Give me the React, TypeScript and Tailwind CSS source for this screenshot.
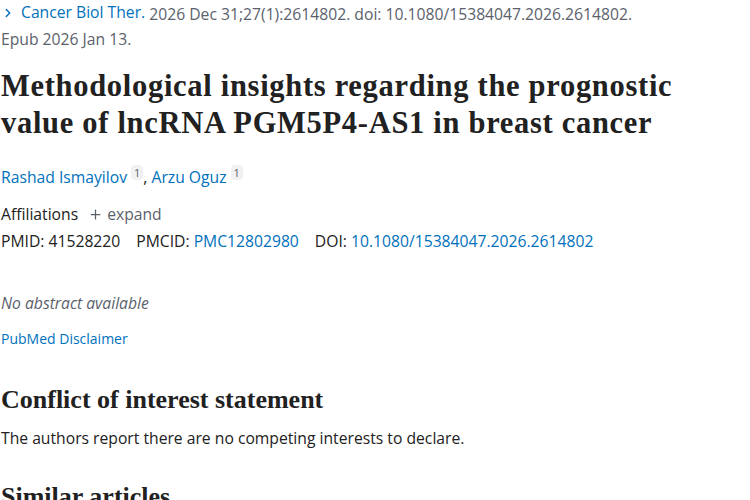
import { ChevronRight, Plus } from "lucide-react";

const sans = { fontFamily: '"Open Sans", "Noto Sans", sans-serif' };
const serif = { fontFamily: '"Liberation Serif", "DejaVu Serif", serif' };

function Sup({ n }: { n: string }) {
  return (
    <sup className="ml-1 rounded-sm bg-[#f1f1f1] px-[3px] text-[11px] text-[#5b616b]">
      {n}
    </sup>
  );
}

export default function App() {
  return (
    <div className="h-screen overflow-hidden bg-white px-[1px] text-[#212121]" style={sans}>
      <div className="text-[15.7px] leading-[25px] text-[#5b616b]">
        <span className="inline-flex items-center text-[#0071bc]">
          <ChevronRight size={14} strokeWidth={2.5} className="mr-[6px]" />
          Cancer Biol Ther.
        </span>{" "}
        2026 Dec 31;27(1):2614802. doi: 10.1080/15384047.2026.2614802.
        <br />
        Epub 2026 Jan 13.
      </div>

      <h1
        className="mt-[16px] max-w-[705px] text-[30.5px] font-bold leading-[37px] tracking-[0.7px] text-[#212121]"
        style={serif}
      >
        Methodological insights regarding the prognostic value of lncRNA
        PGM5P4-AS1 in breast cancer
      </h1>

      <div className="mt-[23px] text-[15.7px] leading-[24px] text-[#0071bc]">
        Rashad Ismayilov
        <Sup n="1" />
        <span className="text-[#212121]">, </span>
        Arzu Oguz
        <Sup n="1" />
      </div>

      <div className="mt-[13px] flex items-center text-[15.7px] leading-[25px]">
        <span>Affiliations</span>
        <span className="ml-[10px] inline-flex items-center text-[#5b616b]">
          <Plus size={15} strokeWidth={2} className="mr-[4px]" />
          expand
        </span>
      </div>

      <div className="mt-[2px] text-[15.7px] leading-[25px]">
        PMID: 41528220
        <span className="ml-[16px]">PMCID: </span>
        <span className="text-[#0071bc]">PMC12802980</span>
        <span className="ml-[16px]">DOI: </span>
        <span className="text-[#0071bc]">10.1080/15384047.2026.2614802</span>
      </div>

      <div className="mt-[37px] text-[15.7px] italic leading-[25px] text-[#5b616b]">
        No abstract available
      </div>

      <div className="mt-[12px] text-[14px] leading-[22px] text-[#0071bc]">
        PubMed Disclaimer
      </div>

      <h2
        className="mt-[34px] text-[26px] font-bold leading-[32px]"
        style={serif}
      >
        Conflict of interest statement
      </h2>

      <p className="mt-[10px] text-[15.7px] leading-[25px]">
        The authors report there are no competing interests to declare.
      </p>

      <h2
        className="mt-[30px] text-[26px] font-bold leading-[32px]"
        style={serif}
      >
        Similar articles
      </h2>
    </div>
  );
}
